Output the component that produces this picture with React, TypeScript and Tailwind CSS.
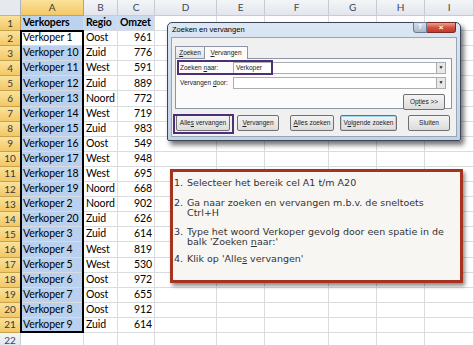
import React from "react";

const data: [string, string, string][] = [
  ["Verkoper 1", "Oost", "961"],
  ["Verkoper 10", "Zuid", "776"],
  ["Verkoper 11", "West", "591"],
  ["Verkoper 12", "Zuid", "889"],
  ["Verkoper 13", "Noord", "772"],
  ["Verkoper 14", "West", "719"],
  ["Verkoper 15", "Zuid", "983"],
  ["Verkoper 16", "Oost", "549"],
  ["Verkoper 17", "West", "948"],
  ["Verkoper 18", "West", "695"],
  ["Verkoper 19", "Noord", "668"],
  ["Verkoper 2", "Noord", "902"],
  ["Verkoper 20", "Zuid", "626"],
  ["Verkoper 3", "Zuid", "614"],
  ["Verkoper 4", "West", "819"],
  ["Verkoper 5", "West", "530"],
  ["Verkoper 6", "Oost", "972"],
  ["Verkoper 7", "Oost", "655"],
  ["Verkoper 8", "Oost", "912"],
  ["Verkoper 9", "Zuid", "614"],
];

const letters = ["A", "B", "C", "D", "E", "F", "G", "H", "I"];

function Cell({ children, className = "" }: { children?: React.ReactNode; className?: string }) {
  return (
    <div className={`border-r border-b border-[#d9dbde] px-[2px] flex items-center overflow-hidden whitespace-nowrap ${className}`}>
      {children}
    </div>
  );
}

function Btn({ children, className = "" }: { children: React.ReactNode; className?: string }) {
  return (
    <div
      className={`h-[16px] flex items-center justify-center rounded-[2px] border border-[#707070] bg-gradient-to-b from-[#f4f4f4] to-[#dcdcdc] text-[6.5px] text-[#222] ${className}`}
    >
      {children}
    </div>
  );
}

function Sheet() {
  return (
    <div className="relative grid grid-cols-[21px_63px_34px_37px_62px_48px_64px_48px_48px_49px] grid-rows-[16px_repeat(22,15.1px)] font-['Lato',sans-serif] text-[10.5px] tracking-[-0.1px] text-black">
      {/* header row */}
      <div className="border-r border-b border-[#aab4c2] bg-[#e6e9ee]" />
      {letters.map((l) => (
        <div
          key={l}
          className={`flex items-center justify-center border-r border-b text-[10px] ${
            l === "A"
              ? "bg-gradient-to-b from-[#fae29a] to-[#f3c865] border-[#c9a34c] text-[#3a3a3a]"
              : "bg-gradient-to-b from-[#f3f5f8] to-[#e2e6ec] border-[#c5ccd6] text-[#3b4658]"
          }`}
        >
          {l}
        </div>
      ))}

      {/* row 1 */}
      <div className="flex items-center justify-center border-r border-b border-[#c9a34c] bg-gradient-to-b from-[#fae29a] to-[#f3c865] text-[10px] text-[#3a3a3a]">
        1
      </div>
      <Cell className="bg-[#bcd3ef] font-bold">Verkopers</Cell>
      <Cell className="bg-[#c9dbf1] font-bold">Regio</Cell>
      <Cell className="bg-[#c9dbf1] font-bold">Omzet</Cell>
      {letters.slice(3).map((l) => (
        <Cell key={l} className="bg-white" />
      ))}

      {data.map(([name, regio, omzet], i) => (
        <React.Fragment key={name}>
          <div className="flex items-center justify-center border-r border-b border-[#c9a34c] bg-gradient-to-b from-[#fae29a] to-[#f3c865] text-[10px] text-[#3a3a3a]">
            {i + 2}
          </div>
          <Cell className={i === 0 ? "bg-white" : "bg-[#b9d1ee]"}>{name}</Cell>
          <Cell className="bg-white">{regio}</Cell>
          <Cell className="bg-white justify-end">{omzet}</Cell>
          {letters.slice(3).map((l) => (
            <Cell key={l} className="bg-white" />
          ))}
        </React.Fragment>
      ))}

      {/* row 22 */}
      <div className="flex items-center justify-center border-r border-b border-[#c5ccd6] bg-gradient-to-b from-[#f3f5f8] to-[#e2e6ec] text-[10px] text-[#3b4658]">
        22
      </div>
      {letters.map((l) => (
        <Cell key={l} className="bg-white" />
      ))}

      {/* selection border A2:A21 */}
      <div className="absolute inset-0 col-start-2 col-end-3 row-start-3 row-end-23 -ml-[1px] -mt-[1px] border-2 border-black pointer-events-none" />
    </div>
  );
}

function Dialog() {
  return (
    <div className="absolute left-[167px] top-[22px] w-[294px] h-[119px] rounded-t-[5px] rounded-b-[2px] border border-[#3a4657] bg-gradient-to-b from-[#dce7f4] via-[#cddbed] to-[#c2d2e7] shadow-[3px_4px_5px_rgba(0,0,0,0.55)] font-['Liberation_Sans',sans-serif]">
      {/* title bar */}
      <div className="h-[14px] flex items-center pl-[4px] text-[7.5px] text-black">Zoeken en vervangen</div>
      <div className="absolute right-[4px] top-[-1px] flex">
        <div className="w-[14px] h-[11px] flex items-center justify-center rounded-bl-[3px] border border-[#6a7890] bg-gradient-to-b from-[#d3dcea] to-[#a9b8cf] text-[7px] font-bold text-white">
          ?
        </div>
        <div className="w-[29px] h-[11px] flex items-center justify-center rounded-br-[3px] border border-l-0 border-[#7a2a22] bg-gradient-to-b from-[#e8a095] via-[#d5503f] to-[#c23a28] text-[8px] font-bold text-white">
          ×
        </div>
      </div>

      {/* client area */}
      <div className="mx-[3px] h-[100px] border border-[#97a5b8] bg-[#f0f0f0] px-[3px] pt-[7px]">
        {/* tabs */}
        <div className="flex items-end h-[13px] text-[6.5px] text-[#222]">
          <div className="w-[30px] h-[12px] flex items-center justify-center border border-b-0 border-[#8c95a5] bg-gradient-to-b from-[#f6f6f6] to-[#e3e3e3]">
            <span><span className="underline">Z</span>oeken</span>
          </div>
          <div className="w-[43px] h-[13px] flex items-center justify-center border border-b-0 border-l-0 border-[#8c95a5] bg-[#fbfbfb] relative z-10 -mb-[1px]">
            <span><span className="underline">V</span>ervangen</span>
          </div>
        </div>
        {/* tab panel */}
        <div className="relative h-[51px] w-[277px] border border-[#8c95a5] bg-[#fbfbfb] text-[6.5px] text-[#222]">
          <div className="flex items-center h-[12px] mt-[3px] ml-[4px]">
            <div className="w-[53px]">
              Zoeken <span className="underline">n</span>aar:
            </div>
            <div className="flex h-[12px] w-[213px] border border-[#abadb3] bg-white">
              <div className="flex-1 flex items-center pl-[2px]">Verkoper</div>
              <div className="w-[9px] flex items-center justify-center border-l border-[#abadb3] bg-[#e8e8e8] text-[5px]">▼</div>
            </div>
          </div>
          <div className="flex items-center h-[12px] mt-[3px] ml-[4px]">
            <div className="w-[53px]">
              Vervangen <span className="underline">d</span>oor:
            </div>
            <div className="flex h-[12px] w-[213px] border border-[#abadb3] bg-white">
              <div className="flex-1" />
              <div className="w-[9px] flex items-center justify-center border-l border-[#abadb3] bg-[#e8e8e8] text-[5px]">▼</div>
            </div>
          </div>
          <div className="flex justify-end mt-[5px] mr-[6px]">
            <Btn className="w-[42px] h-[12px]">
              <span>Op<span className="underline">t</span>ies &gt;&gt;</span>
            </Btn>
          </div>
        </div>

        {/* buttons */}
        <div className="flex mt-[6px] ml-[1px]">
          <Btn className="w-[54px]">
            <span>Alle<span className="underline">s</span> vervangen</span>
          </Btn>
          <Btn className="w-[42px] ml-[7px]">
            <span><span className="underline">V</span>ervangen</span>
          </Btn>
          <Btn className="w-[44px] ml-[11px]">
            <span><span className="underline">A</span>lles zoeken</span>
          </Btn>
          <Btn className="w-[57px] ml-[6px] border-[#3c7fb1] from-[#eaf6fd] to-[#bfe2f6] shadow-[inset_0_0_0_1px_#9ed6f6]">
            <span>V<span className="underline">o</span>lgende zoeken</span>
          </Btn>
          <Btn className="w-[42px] ml-[11px]">Sluiten</Btn>
        </div>
      </div>

      {/* annotation boxes */}
      <div className="absolute left-[9px] top-[37px] w-[96px] h-[15px] border-2 border-[#4d2f78] pointer-events-none" />
      <div className="absolute left-[5px] top-[91px] w-[61px] h-[20px] border-2 border-[#4d2f78] pointer-events-none" />
    </div>
  );
}

function Steps() {
  return (
    <div className="absolute left-[170px] top-[169px] w-[293px] h-[114px] border-[3px] border-[#a5331f] bg-[#f7f6f3] shadow-[2px_3px_4px_rgba(0,0,0,0.45)] pl-[1px] pt-[6px] font-['DejaVu_Sans',sans-serif] text-[9.5px] leading-[10px] text-[#333]">
      <div className="flex">
        <span className="w-[13px] shrink-0">1.</span>
        <span>Selecteer het bereik cel A1 t/m A20</span>
      </div>
      <div className="flex mt-[10px]">
        <span className="w-[13px] shrink-0">2.</span>
        <span>
          Ga naar zoeken en vervangen m.b.v. de sneltoets
          <br />
          Ctrl+H
        </span>
      </div>
      <div className="flex mt-[9px]">
        <span className="w-[13px] shrink-0">3.</span>
        <span>
          Type het woord Verkoper gevolg door een spatie in de
          <br />
          balk 'Zoeken <span className="underline">n</span>aar:'
        </span>
      </div>
      <div className="flex mt-[7px]">
        <span className="w-[13px] shrink-0">4.</span>
        <span>
          Klik op 'Alle<span className="underline">s</span> vervangen'
        </span>
      </div>
    </div>
  );
}

export default function App() {
  return (
    <div className="relative w-[474px] h-[345px] overflow-hidden bg-white">
      <Sheet />
      <Dialog />
      <Steps />
    </div>
  );
}
